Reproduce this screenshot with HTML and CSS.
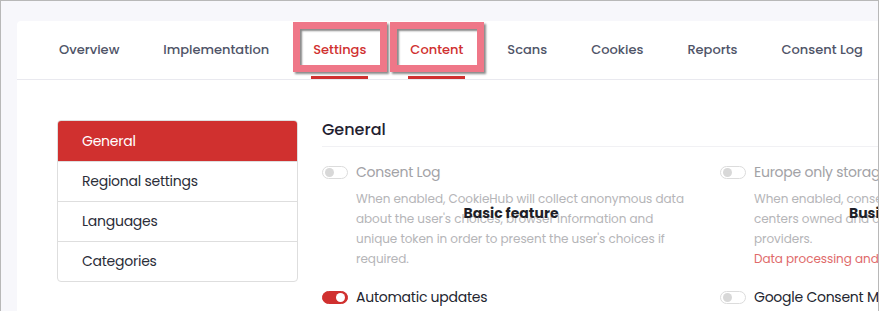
FILE: index.html
```html
<!DOCTYPE html>
<html lang="en">
<head>
<meta charset="utf-8">
<title>Settings</title>
<link rel="stylesheet" href="styles.css">
</head>
<body>
<div class="frame">
  <div class="card">
    <nav class="tabs">
      <a class="tab">Overview</a>
      <a class="tab">Implementation</a>
      <a class="tab active hl">Settings</a>
      <a class="tab active hl">Content</a>
      <a class="tab">Scans</a>
      <a class="tab">Cookies</a>
      <a class="tab">Reports</a>
      <a class="tab">Consent Log</a>
    </nav>
    <div class="content">
      <ul class="side">
        <li class="side-item current">General</li>
        <li class="side-item">Regional settings</li>
        <li class="side-item">Languages</li>
        <li class="side-item">Categories</li>
      </ul>
      <section class="main">
        <h2 class="title">General</h2>
        <div class="grid">
          <div class="opt disabled">
            <div class="row"><span class="toggle"></span><span class="label">Consent Log</span></div>
            <p class="desc">When enabled, CookieHub will collect anonymous data<br>about the user's choices, browser information and<br>unique token in order to present the user's choices if<br>required.</p>
            <span class="badge">Basic feature</span>
          </div>
          <div class="opt disabled">
            <div class="row"><span class="toggle"></span><span class="label">Europe only storage</span></div>
            <p class="desc">When enabled, consent data will be stored in data<br>centers owned and operated by European<br>providers.<br><span class="link">Data processing and storage</span></p>
            <span class="badge">Business feature</span>
          </div>
          <div class="opt">
            <div class="row"><span class="toggle on"></span><span class="label">Automatic updates</span></div>
          </div>
          <div class="opt">
            <div class="row"><span class="toggle"></span><span class="label">Google Consent Mode</span></div>
          </div>
        </div>
      </section>
    </div>
  </div>
</div>
</body>
</html>
```

FILE: styles.css
```css
*, *::before, *::after { box-sizing: border-box; }
html, body { margin: 0; padding: 0; }
body {
  font-family: "Poppins", "Inter", "Noto Sans", sans-serif;
  background: #ffffff;
}
.frame {
  width: 879px;
  height: 311px;
  border: 1px solid #b8b8b8;
  border-bottom: none;
  background: #f7f7fb;
  overflow: hidden;
}
.card {
  margin: 20px 0 0 16px;
  width: 1120px;
  height: 400px;
  background: #ffffff;
  border-radius: 4px 0 0 0;
}
.tabs {
  display: flex;
  height: 59px;
  padding-left: 20px;
  border-bottom: 1px solid #e9e9ef;
}
.tab {
  position: relative;
  display: flex;
  align-items: center;
  padding: 0 22px;
  font-size: 13px;
  font-weight: 500;
  color: #4f5468;
  white-space: nowrap;
}
.tab.active { color: #d0302f; }
.tab.active::after {
  content: "";
  position: absolute;
  left: 20px;
  right: 20px;
  bottom: 0;
  height: 3px;
  background: #d0302f;
}
.tab.hl::before {
  content: "";
  position: absolute;
  left: 2px;
  right: 1px;
  top: 1px;
  height: 50px;
  border: 7px solid #ef7788;
  box-shadow: inset 2px 2px 2px rgba(40, 40, 40, 0.55), 2px 2px 2px rgba(40, 40, 40, 0.55);
}
.content {
  display: flex;
  gap: 24px;
  padding: 40px 0 0 40px;
}
.side {
  list-style: none;
  margin: 0;
  padding: 0;
  width: 241px;
  flex: none;
  border: 1px solid #dedede;
  border-radius: 4px;
  overflow: hidden;
  align-self: flex-start;
}
.side-item {
  height: 40px;
  display: flex;
  align-items: center;
  padding-left: 24px;
  font-size: 14px;
  letter-spacing: -0.25px;
  color: #2b2d38;
  border-top: 1px solid #dedede;
}
.side-item:first-child { border-top: none; }
.side-item.current {
  background: #d0302f;
  color: #ffffff;
}
.main { flex: 1; }
.title {
  margin: 0;
  font-size: 16px;
  font-weight: 500;
  line-height: 20px;
  color: #1f2130;
  padding-bottom: 6px;
  border-bottom: 1px solid #f1f1f4;
}
.grid {
  display: grid;
  grid-template-columns: 378px 378px;
  column-gap: 20px;
  row-gap: 18px;
  padding-top: 15px;
}
.opt { position: relative; }
.row {
  display: flex;
  align-items: center;
  height: 20px;
  gap: 8px;
}
.toggle {
  position: relative;
  width: 26px;
  height: 13px;
  flex: none;
  border: 1px solid #dcdcdc;
  border-radius: 7px;
  background: #ffffff;
}
.toggle::after {
  content: "";
  position: absolute;
  left: 2px;
  top: 1px;
  width: 9px;
  height: 9px;
  border-radius: 50%;
  background: #d8d8d8;
}
.toggle.on {
  background: #d0302f;
  border-color: #d0302f;
}
.toggle.on::after {
  left: auto;
  right: 2px;
  background: #ffffff;
}
.label {
  font-size: 14px;
  letter-spacing: -0.25px;
  color: #23252f;
  white-space: nowrap;
}
.disabled .label { color: #a2a2a6; }
.desc {
  margin: 7px 0 0 34px;
  font-size: 12px;
  letter-spacing: -0.05px;
  line-height: 20px;
  color: #b5b5b8;
  white-space: nowrap;
}
.link { color: #e06a6a; }
.badge {
  position: absolute;
  left: 0;
  right: 0;
  top: 41px;
  text-align: center;
  font-size: 14px;
  font-weight: 700;
  color: #1e1f28;
  white-space: nowrap;
}
```
